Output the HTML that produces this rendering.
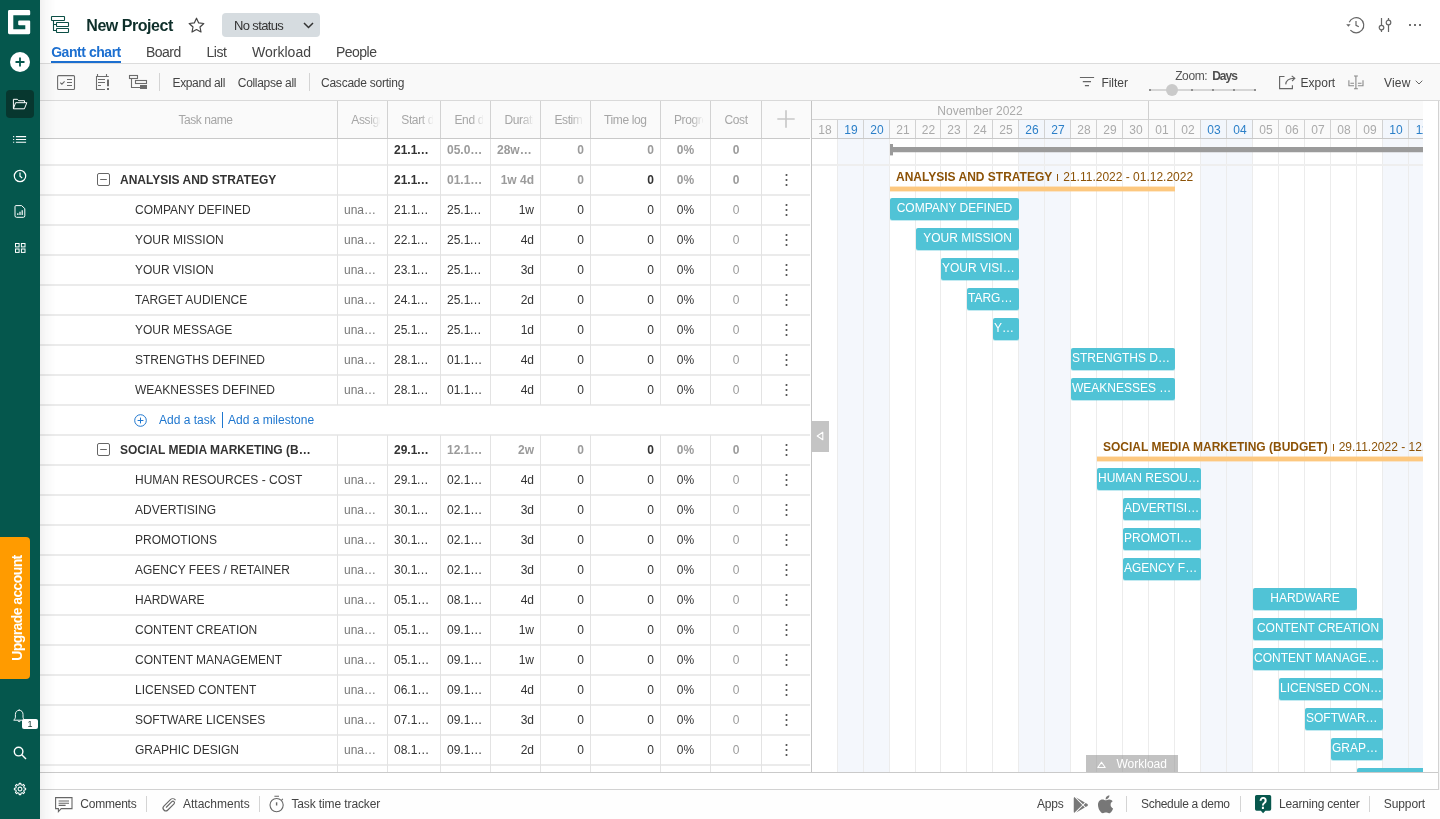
<!DOCTYPE html>
<html lang="en"><head><meta charset="utf-8"><title>New Project - Gantt chart</title>
<style>
*{box-sizing:border-box;margin:0;padding:0}
html,body{width:1440px;height:819px;overflow:hidden;background:#fff}
body{font-family:"Liberation Sans",Arial,sans-serif;font-size:12px;color:#333;position:relative}
.t{position:absolute;white-space:nowrap}
.abs{position:absolute}
svg{position:absolute;overflow:visible}
#side{position:absolute;left:0;top:0;width:40px;height:819px;background:#05574d}
#sideshadow{position:absolute;left:40px;top:0;width:16px;height:819px;background:linear-gradient(to right,rgba(0,0,0,.06),rgba(0,0,0,.028) 35%,rgba(0,0,0,0))}
.row{position:absolute;left:40px;width:770px;height:30px;border-bottom:1px solid #ebebeb;border-top:1px solid #ebebeb;background:#fff}
.c{position:absolute;top:-1px;height:30px;line-height:30px;white-space:nowrap;overflow:hidden;text-overflow:ellipsis;font-size:12px;color:#333}
.cb{border-left:1px solid #e3e3e3}
.g{color:#9b9b9b}
.g2{color:#777}
.b{font-weight:700}
.bar{position:absolute;height:22px;box-shadow:0 1px 0 rgba(80,195,214,.35);background:#50c3d6;border-radius:2px;color:#fff;font-size:12px;line-height:21px;text-align:center;white-space:nowrap;overflow:hidden;text-overflow:ellipsis}
.dc{position:absolute;height:18px;border-right:1px solid #d2d2d2;text-align:center;font-size:12px;line-height:20px;color:#aaa;padding-left:1px}
.we{background:#f2f6fc;color:#2b7fc8}
</style></head><body>
<div id="app" style="position:absolute;left:0;top:0;width:1440px;height:819px;will-change:transform">

<div class="abs" style="left:40px;top:63px;width:1400px;height:1px;background:#dcdcdc"></div>
<svg style="left:44px;top:8px" width="30" height="30" viewBox="0 0 30 30" fill="none" stroke="#0c4f46" stroke-width="1.1"><rect x="7.500" y="8.500" width="13" height="4" rx="0.500"/><rect x="12.500" y="14.500" width="12" height="4" rx="0.500"/><rect x="12.500" y="20.500" width="12" height="4" rx="0.500"/><path d="M9.500 12.500V22.500H12.500M9.500 16.500H12.500"/></svg>
<span class="t" style="left:86.30px;top:17.76px;font-size:16px;line-height:16px;letter-spacing:-0.459px;color:#0e2f2a;font-weight:700;">New Project</span>
<svg style="left:188px;top:17px" width="17" height="16" viewBox="0 0 17 16" fill="none" stroke="#444" stroke-width="1.2" stroke-linejoin="round">
<path d="M8.5 1.2l2.2 4.7 5.1.6-3.8 3.5 1 5-4.5-2.5L4 15l1-5L1.2 6.5l5.1-.6z"/></svg>
<div class="abs" style="left:222px;top:13px;width:98px;height:24px;background:#d6dce0;border-radius:4px"></div>
<span class="t" style="left:234.00px;top:18.50px;font-size:13px;line-height:13px;letter-spacing:-0.639px;color:#333;">No status</span>
<svg style="left:303px;top:22px" width="11" height="7" viewBox="0 0 11 7" fill="none" stroke="#333" stroke-width="1.5"><path d="M1 1l4.5 4.5L10 1"/></svg>
<span class="t" style="left:51.20px;top:45.35px;font-size:14px;line-height:14px;letter-spacing:-0.458px;color:#1c6fd0;font-weight:700;">Gantt chart</span>
<div class="abs" style="left:51px;top:61px;width:70px;height:2px;background:#1c6fd0"></div>
<span class="t" style="left:146.00px;top:45.35px;font-size:14px;line-height:14px;letter-spacing:-0.539px;color:#444;">Board</span>
<span class="t" style="left:206.50px;top:45.35px;font-size:14px;line-height:14px;letter-spacing:-0.429px;color:#444;">List</span>
<span class="t" style="left:252.00px;top:45.35px;font-size:14px;line-height:14px;letter-spacing:0.017px;color:#444;">Workload</span>
<span class="t" style="left:336.00px;top:45.35px;font-size:14px;line-height:14px;letter-spacing:-0.518px;color:#444;">People</span>
<svg style="left:1345px;top:15px" width="22" height="20" viewBox="0 0 22 20" fill="none" stroke="#666" stroke-width="1.2">
<path d="M4.2 7.2A7.6 7.6 0 1 1 5.4 15.2"/><path d="M11 6v4.3l2.8 1.4"/><path d="M1.2 9.2h4.4L3.4 11.8z" fill="#666" stroke="none"/></svg>
<svg style="left:1377px;top:17px" width="16" height="16" viewBox="0 0 16 16" fill="none" stroke="#666" stroke-width="1.2">
<path d="M4.5 1v7.2M4.5 13v2M11.5 1v2M11.5 8v7"/><circle cx="4.5" cy="10.6" r="2.3"/><circle cx="11.5" cy="5.5" r="2.3"/></svg>
<div class="abs" style="left:1409px;top:24px;width:2px;height:2px;background:#707070"></div>
<div class="abs" style="left:1414px;top:24px;width:2px;height:2px;background:#707070"></div>
<div class="abs" style="left:1419px;top:24px;width:2px;height:2px;background:#707070"></div>
<div class="abs" style="left:40px;top:64px;width:1400px;height:36px;background:#f9f9f9"></div>
<div class="abs" style="left:40px;top:100px;width:1400px;height:1px;background:#d9d9d9"></div>
<svg style="left:50px;top:68px" width="100" height="28" viewBox="0 0 100 28" fill="none" stroke="#6c6c6c" stroke-width="1.1">
<rect x="7.6" y="7.6" width="16.9" height="13.9" rx="1"/><path d="M10.200 14.600l1.700 1.600 2.700-2.900M17 11.500H22M17 14.500H22M17 17.500H22"/>
<path d="M46.500 21.500V8.500H58.800M46 21.500H55M47.500 6.100V8.500M56.500 6.100V8.500M48 11.500H55M48 14.500H55M48 17.500H51"/><path d="M58 11.500V18.200M58 20V22" stroke-width="2"/>
<rect x="79.500" y="7.500" width="8" height="3"/><rect x="85.500" y="12.500" width="11" height="3"/><path d="M81.500 10.500V19.500H90"/><rect x="90" y="17" width="7" height="4" fill="#6c6c6c" stroke="none"/></svg>
<div class="abs" style="left:159px;top:73px;width:1px;height:18px;background:#d4d4d4"></div>
<span class="t" style="left:172.50px;top:76.94px;font-size:12px;line-height:12px;letter-spacing:-0.360px;color:#444;">Expand all</span>
<span class="t" style="left:237.80px;top:76.94px;font-size:12px;line-height:12px;letter-spacing:-0.312px;color:#444;">Collapse all</span>
<div class="abs" style="left:309px;top:73px;width:1px;height:18px;background:#d4d4d4"></div>
<span class="t" style="left:321.00px;top:76.94px;font-size:12px;line-height:12px;letter-spacing:-0.236px;color:#444;">Cascade sorting</span>
<svg style="left:1070px;top:68px" width="30" height="28" viewBox="0 0 30 28" fill="none" stroke="#666" stroke-width="1.1"><path d="M9.9 9.5H24.1M12.8 13.6H21M14.9 17.6H19"/></svg>
<span class="t" style="left:1101.40px;top:77.14px;font-size:12px;line-height:12px;letter-spacing:-0.013px;color:#444;">Filter</span>
<span class="t" style="left:1175.20px;top:70.34px;font-size:12px;line-height:12px;letter-spacing:-0.402px;color:#555;">Zoom:</span>
<span class="t" style="left:1212.20px;top:70.34px;font-size:12px;line-height:12px;letter-spacing:-0.995px;color:#505050;font-weight:700;">Days</span>
<div class="abs" style="left:1149px;top:89px;width:107px;height:2px;background:#d6d6d6"></div>
<div class="abs" style="left:1149px;top:89px;width:2px;height:2px;background:#8f8f8f"></div>
<div class="abs" style="left:1191px;top:89px;width:2px;height:2px;background:#8f8f8f"></div>
<div class="abs" style="left:1212px;top:89px;width:2px;height:2px;background:#8f8f8f"></div>
<div class="abs" style="left:1233px;top:89px;width:2px;height:2px;background:#8f8f8f"></div>
<div class="abs" style="left:1254px;top:89px;width:2px;height:2px;background:#8f8f8f"></div>
<div class="abs" style="left:1165.5px;top:84px;width:12px;height:12px;border-radius:6px;background:#cacaca"></div>
<svg style="left:1270px;top:68px" width="30" height="28" viewBox="0 0 30 28" fill="none" stroke="#666" stroke-width="1.15"><path d="M14.5 8.5H9.6V20.6H22.4V17.2"/><path d="M15.7 16.4C16 12.6 19 10.5 24.2 10.3M21.7 7.9L24.8 10.3 22.1 13"/></svg>
<span class="t" style="left:1300.60px;top:77.14px;font-size:12px;line-height:12px;letter-spacing:-0.017px;color:#444;">Export</span>
<svg style="left:1270px;top:68px" width="100" height="28" viewBox="0 0 100 28" fill="none" stroke="#8a8a8a" stroke-width="1.1"><path d="M85.9 8V20.8M84 8H87.9M84 20.8H87.9M78.9 12.2V17.7H84M80.4 15.2H84M93 12.2V17.7H87.9M91.5 15.2H87.9"/></svg>
<span class="t" style="left:1384.00px;top:77.14px;font-size:12px;line-height:12px;letter-spacing:0.203px;color:#444;">View</span>
<svg style="left:1415px;top:80px" width="8" height="5" viewBox="0 0 8 5" fill="none" stroke="#666" stroke-width="1"><path d="M0.7 0.7l3.3 3.3 3.3-3.3"/></svg>
<div class="abs" style="left:40px;top:101px;width:771px;height:37px;background:#fafafa"></div>
<div class="abs" style="left:40px;top:138px;width:770px;height:1px;background:#c9c9c9"></div>
<div class="abs" style="left:337px;top:101px;width:1px;height:37px;background:#d2d2d2"></div>
<div class="abs" style="left:387px;top:101px;width:1px;height:37px;background:#d2d2d2"></div>
<div class="abs" style="left:440px;top:101px;width:1px;height:37px;background:#d2d2d2"></div>
<div class="abs" style="left:490px;top:101px;width:1px;height:37px;background:#d2d2d2"></div>
<div class="abs" style="left:540px;top:101px;width:1px;height:37px;background:#d2d2d2"></div>
<div class="abs" style="left:590px;top:101px;width:1px;height:37px;background:#d2d2d2"></div>
<div class="abs" style="left:660px;top:101px;width:1px;height:37px;background:#d2d2d2"></div>
<div class="abs" style="left:710px;top:101px;width:1px;height:37px;background:#d2d2d2"></div>
<div class="abs" style="left:761px;top:101px;width:1px;height:37px;background:#d2d2d2"></div>
<span class="t" style="left:178.40px;top:113.74px;font-size:12px;line-height:12px;letter-spacing:-0.428px;color:#a6a6a6;">Task name</span>
<span class="t" style="left:351.3px;top:113.74px;font-size:12px;line-height:14px;margin-top:-1px;letter-spacing:-0.38px;color:#a6a6a6;width:28.69999999999999px;overflow:hidden;-webkit-mask-image:linear-gradient(to right,#000 16.69999999999999px,rgba(0,0,0,.12) 28.69999999999999px);mask-image:linear-gradient(to right,#000 16.69999999999999px,rgba(0,0,0,.12) 28.69999999999999px);">Assignee</span>
<span class="t" style="left:401.3px;top:113.74px;font-size:12px;line-height:14px;margin-top:-1px;letter-spacing:-0.38px;color:#a6a6a6;width:31.69999999999999px;overflow:hidden;-webkit-mask-image:linear-gradient(to right,#000 19.69999999999999px,rgba(0,0,0,.12) 31.69999999999999px);mask-image:linear-gradient(to right,#000 19.69999999999999px,rgba(0,0,0,.12) 31.69999999999999px);">Start date</span>
<span class="t" style="left:454.5px;top:113.74px;font-size:12px;line-height:14px;margin-top:-1px;letter-spacing:-0.38px;color:#a6a6a6;width:28.5px;overflow:hidden;-webkit-mask-image:linear-gradient(to right,#000 16.5px,rgba(0,0,0,.12) 28.5px);mask-image:linear-gradient(to right,#000 16.5px,rgba(0,0,0,.12) 28.5px);">End date</span>
<span class="t" style="left:504.5px;top:113.74px;font-size:12px;line-height:14px;margin-top:-1px;letter-spacing:-0.38px;color:#a6a6a6;width:28.5px;overflow:hidden;-webkit-mask-image:linear-gradient(to right,#000 16.5px,rgba(0,0,0,.12) 28.5px);mask-image:linear-gradient(to right,#000 16.5px,rgba(0,0,0,.12) 28.5px);">Duration</span>
<span class="t" style="left:554.4px;top:113.74px;font-size:12px;line-height:14px;margin-top:-1px;letter-spacing:-0.38px;color:#a6a6a6;width:28.600000000000023px;overflow:hidden;-webkit-mask-image:linear-gradient(to right,#000 16.600000000000023px,rgba(0,0,0,.12) 28.600000000000023px);mask-image:linear-gradient(to right,#000 16.600000000000023px,rgba(0,0,0,.12) 28.600000000000023px);">Estimation</span>
<span class="t" style="left:604px;top:113.74px;font-size:12px;line-height:14px;margin-top:-1px;letter-spacing:-0.38px;color:#a6a6a6;">Time log</span>
<span class="t" style="left:674px;top:113.74px;font-size:12px;line-height:14px;margin-top:-1px;letter-spacing:-0.38px;color:#a6a6a6;width:29px;overflow:hidden;-webkit-mask-image:linear-gradient(to right,#000 17px,rgba(0,0,0,.12) 29px);mask-image:linear-gradient(to right,#000 17px,rgba(0,0,0,.12) 29px);">Progress</span>
<span class="t" style="left:724.5px;top:113.74px;font-size:12px;line-height:14px;margin-top:-1px;letter-spacing:-0.38px;color:#a6a6a6;">Cost</span>
<svg style="left:777px;top:110px" width="18" height="18" viewBox="0 0 18 18" fill="none" stroke="#c8c8c8" stroke-width="1.7"><path d="M9 0.3v17.4M0.3 9h17.4"/></svg>
<div class="abs" style="left:0;top:139px;width:1440px;height:633px;overflow:hidden">
<div class="row" style="top:-4px">
<div class="c cb g2" style="left:297px;width:50px;padding:0 6px 0 6px;text-align:left;"></div>
<div class="c cb b" style="left:347px;width:53px;padding:0 6px 0 6px;text-align:left;">21.11.2022</div>
<div class="c cb g b" style="left:400px;width:50px;padding:0 6px 0 6px;text-align:left;">05.06.2023</div>
<div class="c cb g b" style="left:450px;width:50px;padding:0 6px 0 6px;text-align:right;">28w 1d</div>
<div class="c cb g b" style="left:500px;width:50px;padding:0 6px 0 6px;text-align:right;">0</div>
<div class="c cb g b" style="left:550px;width:70px;padding:0 6px 0 6px;text-align:right;">0</div>
<div class="c cb g b" style="left:620px;width:50px;padding:0 6px 0 6px;text-align:center;">0%</div>
<div class="c cb g b" style="left:670px;width:51px;padding:0 6px 0 6px;text-align:center;">0</div>
<div class="c cb " style="left:721px;width:50px;padding:0 6px 0 6px;text-align:left;"></div>
</div>
<div class="row" style="top:26px">
<svg style="left:57px;top:7px" width="13" height="13" viewBox="0 0 13 13" fill="none" stroke="#666" stroke-width="1"><rect x="0.5" y="0.5" width="12" height="12" rx="1.500"/><path d="M3.200 6.500h6.600"/></svg>
<div class="c b" style="left:80px;width:198px;color:#333">ANALYSIS AND STRATEGY</div>
<div class="c cb g2" style="left:297px;width:50px;padding:0 6px 0 6px;text-align:left;"></div>
<div class="c cb b" style="left:347px;width:53px;padding:0 6px 0 6px;text-align:left;">21.11.2022</div>
<div class="c cb g b" style="left:400px;width:50px;padding:0 6px 0 6px;text-align:left;">01.12.2022</div>
<div class="c cb g b" style="left:450px;width:50px;padding:0 6px 0 6px;text-align:right;">1w 4d</div>
<div class="c cb g b" style="left:500px;width:50px;padding:0 6px 0 6px;text-align:right;">0</div>
<div class="c cb b" style="left:550px;width:70px;padding:0 6px 0 6px;text-align:right;">0</div>
<div class="c cb g b" style="left:620px;width:50px;padding:0 6px 0 6px;text-align:center;">0%</div>
<div class="c cb g b" style="left:670px;width:51px;padding:0 6px 0 6px;text-align:center;">0</div>
<div class="c cb " style="left:721px;width:50px;padding:0 6px 0 6px;text-align:left;"></div>
<svg style="left:745px;top:7px" width="3" height="14" viewBox="0 0 3 14" fill="#4a4a4a"><circle cx="1.5" cy="2" r="1.05"/><circle cx="1.5" cy="7" r="1.05"/><circle cx="1.5" cy="12" r="1.05"/></svg>
</div>
<div class="row" style="top:56px">
<div class="c" style="left:95px;width:195px">COMPANY DEFINED</div>
<div class="c cb g2" style="left:297px;width:50px;padding:0 6px 0 6px;text-align:left;">unassigned</div>
<div class="c cb " style="left:347px;width:53px;padding:0 6px 0 6px;text-align:left;">21.11.2022</div>
<div class="c cb " style="left:400px;width:50px;padding:0 6px 0 6px;text-align:left;">25.11.2022</div>
<div class="c cb " style="left:450px;width:50px;padding:0 6px 0 6px;text-align:right;">1w</div>
<div class="c cb " style="left:500px;width:50px;padding:0 6px 0 6px;text-align:right;">0</div>
<div class="c cb " style="left:550px;width:70px;padding:0 6px 0 6px;text-align:right;">0</div>
<div class="c cb " style="left:620px;width:50px;padding:0 6px 0 6px;text-align:center;">0%</div>
<div class="c cb g" style="left:670px;width:51px;padding:0 6px 0 6px;text-align:center;">0</div>
<div class="c cb " style="left:721px;width:50px;padding:0 6px 0 6px;text-align:left;"></div>
<svg style="left:745px;top:7px" width="3" height="14" viewBox="0 0 3 14" fill="#4a4a4a"><circle cx="1.5" cy="2" r="1.05"/><circle cx="1.5" cy="7" r="1.05"/><circle cx="1.5" cy="12" r="1.05"/></svg>
</div>
<div class="row" style="top:86px">
<div class="c" style="left:95px;width:195px">YOUR MISSION</div>
<div class="c cb g2" style="left:297px;width:50px;padding:0 6px 0 6px;text-align:left;">unassigned</div>
<div class="c cb " style="left:347px;width:53px;padding:0 6px 0 6px;text-align:left;">22.11.2022</div>
<div class="c cb " style="left:400px;width:50px;padding:0 6px 0 6px;text-align:left;">25.11.2022</div>
<div class="c cb " style="left:450px;width:50px;padding:0 6px 0 6px;text-align:right;">4d</div>
<div class="c cb " style="left:500px;width:50px;padding:0 6px 0 6px;text-align:right;">0</div>
<div class="c cb " style="left:550px;width:70px;padding:0 6px 0 6px;text-align:right;">0</div>
<div class="c cb " style="left:620px;width:50px;padding:0 6px 0 6px;text-align:center;">0%</div>
<div class="c cb g" style="left:670px;width:51px;padding:0 6px 0 6px;text-align:center;">0</div>
<div class="c cb " style="left:721px;width:50px;padding:0 6px 0 6px;text-align:left;"></div>
<svg style="left:745px;top:7px" width="3" height="14" viewBox="0 0 3 14" fill="#4a4a4a"><circle cx="1.5" cy="2" r="1.05"/><circle cx="1.5" cy="7" r="1.05"/><circle cx="1.5" cy="12" r="1.05"/></svg>
</div>
<div class="row" style="top:116px">
<div class="c" style="left:95px;width:195px">YOUR VISION</div>
<div class="c cb g2" style="left:297px;width:50px;padding:0 6px 0 6px;text-align:left;">unassigned</div>
<div class="c cb " style="left:347px;width:53px;padding:0 6px 0 6px;text-align:left;">23.11.2022</div>
<div class="c cb " style="left:400px;width:50px;padding:0 6px 0 6px;text-align:left;">25.11.2022</div>
<div class="c cb " style="left:450px;width:50px;padding:0 6px 0 6px;text-align:right;">3d</div>
<div class="c cb " style="left:500px;width:50px;padding:0 6px 0 6px;text-align:right;">0</div>
<div class="c cb " style="left:550px;width:70px;padding:0 6px 0 6px;text-align:right;">0</div>
<div class="c cb " style="left:620px;width:50px;padding:0 6px 0 6px;text-align:center;">0%</div>
<div class="c cb g" style="left:670px;width:51px;padding:0 6px 0 6px;text-align:center;">0</div>
<div class="c cb " style="left:721px;width:50px;padding:0 6px 0 6px;text-align:left;"></div>
<svg style="left:745px;top:7px" width="3" height="14" viewBox="0 0 3 14" fill="#4a4a4a"><circle cx="1.5" cy="2" r="1.05"/><circle cx="1.5" cy="7" r="1.05"/><circle cx="1.5" cy="12" r="1.05"/></svg>
</div>
<div class="row" style="top:146px">
<div class="c" style="left:95px;width:195px">TARGET AUDIENCE</div>
<div class="c cb g2" style="left:297px;width:50px;padding:0 6px 0 6px;text-align:left;">unassigned</div>
<div class="c cb " style="left:347px;width:53px;padding:0 6px 0 6px;text-align:left;">24.11.2022</div>
<div class="c cb " style="left:400px;width:50px;padding:0 6px 0 6px;text-align:left;">25.11.2022</div>
<div class="c cb " style="left:450px;width:50px;padding:0 6px 0 6px;text-align:right;">2d</div>
<div class="c cb " style="left:500px;width:50px;padding:0 6px 0 6px;text-align:right;">0</div>
<div class="c cb " style="left:550px;width:70px;padding:0 6px 0 6px;text-align:right;">0</div>
<div class="c cb " style="left:620px;width:50px;padding:0 6px 0 6px;text-align:center;">0%</div>
<div class="c cb g" style="left:670px;width:51px;padding:0 6px 0 6px;text-align:center;">0</div>
<div class="c cb " style="left:721px;width:50px;padding:0 6px 0 6px;text-align:left;"></div>
<svg style="left:745px;top:7px" width="3" height="14" viewBox="0 0 3 14" fill="#4a4a4a"><circle cx="1.5" cy="2" r="1.05"/><circle cx="1.5" cy="7" r="1.05"/><circle cx="1.5" cy="12" r="1.05"/></svg>
</div>
<div class="row" style="top:176px">
<div class="c" style="left:95px;width:195px">YOUR MESSAGE</div>
<div class="c cb g2" style="left:297px;width:50px;padding:0 6px 0 6px;text-align:left;">unassigned</div>
<div class="c cb " style="left:347px;width:53px;padding:0 6px 0 6px;text-align:left;">25.11.2022</div>
<div class="c cb " style="left:400px;width:50px;padding:0 6px 0 6px;text-align:left;">25.11.2022</div>
<div class="c cb " style="left:450px;width:50px;padding:0 6px 0 6px;text-align:right;">1d</div>
<div class="c cb " style="left:500px;width:50px;padding:0 6px 0 6px;text-align:right;">0</div>
<div class="c cb " style="left:550px;width:70px;padding:0 6px 0 6px;text-align:right;">0</div>
<div class="c cb " style="left:620px;width:50px;padding:0 6px 0 6px;text-align:center;">0%</div>
<div class="c cb g" style="left:670px;width:51px;padding:0 6px 0 6px;text-align:center;">0</div>
<div class="c cb " style="left:721px;width:50px;padding:0 6px 0 6px;text-align:left;"></div>
<svg style="left:745px;top:7px" width="3" height="14" viewBox="0 0 3 14" fill="#4a4a4a"><circle cx="1.5" cy="2" r="1.05"/><circle cx="1.5" cy="7" r="1.05"/><circle cx="1.5" cy="12" r="1.05"/></svg>
</div>
<div class="row" style="top:206px">
<div class="c" style="left:95px;width:195px">STRENGTHS DEFINED</div>
<div class="c cb g2" style="left:297px;width:50px;padding:0 6px 0 6px;text-align:left;">unassigned</div>
<div class="c cb " style="left:347px;width:53px;padding:0 6px 0 6px;text-align:left;">28.11.2022</div>
<div class="c cb " style="left:400px;width:50px;padding:0 6px 0 6px;text-align:left;">01.12.2022</div>
<div class="c cb " style="left:450px;width:50px;padding:0 6px 0 6px;text-align:right;">4d</div>
<div class="c cb " style="left:500px;width:50px;padding:0 6px 0 6px;text-align:right;">0</div>
<div class="c cb " style="left:550px;width:70px;padding:0 6px 0 6px;text-align:right;">0</div>
<div class="c cb " style="left:620px;width:50px;padding:0 6px 0 6px;text-align:center;">0%</div>
<div class="c cb g" style="left:670px;width:51px;padding:0 6px 0 6px;text-align:center;">0</div>
<div class="c cb " style="left:721px;width:50px;padding:0 6px 0 6px;text-align:left;"></div>
<svg style="left:745px;top:7px" width="3" height="14" viewBox="0 0 3 14" fill="#4a4a4a"><circle cx="1.5" cy="2" r="1.05"/><circle cx="1.5" cy="7" r="1.05"/><circle cx="1.5" cy="12" r="1.05"/></svg>
</div>
<div class="row" style="top:236px">
<div class="c" style="left:95px;width:195px">WEAKNESSES DEFINED</div>
<div class="c cb g2" style="left:297px;width:50px;padding:0 6px 0 6px;text-align:left;">unassigned</div>
<div class="c cb " style="left:347px;width:53px;padding:0 6px 0 6px;text-align:left;">28.11.2022</div>
<div class="c cb " style="left:400px;width:50px;padding:0 6px 0 6px;text-align:left;">01.12.2022</div>
<div class="c cb " style="left:450px;width:50px;padding:0 6px 0 6px;text-align:right;">4d</div>
<div class="c cb " style="left:500px;width:50px;padding:0 6px 0 6px;text-align:right;">0</div>
<div class="c cb " style="left:550px;width:70px;padding:0 6px 0 6px;text-align:right;">0</div>
<div class="c cb " style="left:620px;width:50px;padding:0 6px 0 6px;text-align:center;">0%</div>
<div class="c cb g" style="left:670px;width:51px;padding:0 6px 0 6px;text-align:center;">0</div>
<div class="c cb " style="left:721px;width:50px;padding:0 6px 0 6px;text-align:left;"></div>
<svg style="left:745px;top:7px" width="3" height="14" viewBox="0 0 3 14" fill="#4a4a4a"><circle cx="1.5" cy="2" r="1.05"/><circle cx="1.5" cy="7" r="1.05"/><circle cx="1.5" cy="12" r="1.05"/></svg>
</div>
<div class="row" style="top:266px">
<svg style="left:94px;top:7.5px" width="13" height="13" viewBox="0 0 13 13" fill="none" stroke="#1f77cf" stroke-width="1"><circle cx="6.5" cy="6.5" r="5.8"/><path d="M6.5 3.6v5.8M3.6 6.5h5.8"/></svg>
<span class="t" style="left:119px;top:-1px;line-height:30px;font-size:12px;color:#1f77cf">Add a task</span>
<div class="abs" style="left:182px;top:6px;width:1px;height:16px;background:#1f77cf"></div>
<span class="t" style="left:188px;top:-1px;line-height:30px;font-size:12px;color:#1f77cf">Add a milestone</span>
</div>
<div class="row" style="top:296px">
<svg style="left:57px;top:7px" width="13" height="13" viewBox="0 0 13 13" fill="none" stroke="#666" stroke-width="1"><rect x="0.5" y="0.5" width="12" height="12" rx="1.500"/><path d="M3.200 6.500h6.600"/></svg>
<div class="c b" style="left:80px;width:198px;color:#333">SOCIAL MEDIA MARKETING (BUDGET)</div>
<div class="c cb g2" style="left:297px;width:50px;padding:0 6px 0 6px;text-align:left;"></div>
<div class="c cb b" style="left:347px;width:53px;padding:0 6px 0 6px;text-align:left;">29.11.2022</div>
<div class="c cb g b" style="left:400px;width:50px;padding:0 6px 0 6px;text-align:left;">12.12.2022</div>
<div class="c cb g b" style="left:450px;width:50px;padding:0 6px 0 6px;text-align:right;">2w</div>
<div class="c cb g b" style="left:500px;width:50px;padding:0 6px 0 6px;text-align:right;">0</div>
<div class="c cb b" style="left:550px;width:70px;padding:0 6px 0 6px;text-align:right;">0</div>
<div class="c cb g b" style="left:620px;width:50px;padding:0 6px 0 6px;text-align:center;">0%</div>
<div class="c cb g b" style="left:670px;width:51px;padding:0 6px 0 6px;text-align:center;">0</div>
<div class="c cb " style="left:721px;width:50px;padding:0 6px 0 6px;text-align:left;"></div>
<svg style="left:745px;top:7px" width="3" height="14" viewBox="0 0 3 14" fill="#4a4a4a"><circle cx="1.5" cy="2" r="1.05"/><circle cx="1.5" cy="7" r="1.05"/><circle cx="1.5" cy="12" r="1.05"/></svg>
</div>
<div class="row" style="top:326px">
<div class="c" style="left:95px;width:195px">HUMAN RESOURCES - COST</div>
<div class="c cb g2" style="left:297px;width:50px;padding:0 6px 0 6px;text-align:left;">unassigned</div>
<div class="c cb " style="left:347px;width:53px;padding:0 6px 0 6px;text-align:left;">29.11.2022</div>
<div class="c cb " style="left:400px;width:50px;padding:0 6px 0 6px;text-align:left;">02.12.2022</div>
<div class="c cb " style="left:450px;width:50px;padding:0 6px 0 6px;text-align:right;">4d</div>
<div class="c cb " style="left:500px;width:50px;padding:0 6px 0 6px;text-align:right;">0</div>
<div class="c cb " style="left:550px;width:70px;padding:0 6px 0 6px;text-align:right;">0</div>
<div class="c cb " style="left:620px;width:50px;padding:0 6px 0 6px;text-align:center;">0%</div>
<div class="c cb g" style="left:670px;width:51px;padding:0 6px 0 6px;text-align:center;">0</div>
<div class="c cb " style="left:721px;width:50px;padding:0 6px 0 6px;text-align:left;"></div>
<svg style="left:745px;top:7px" width="3" height="14" viewBox="0 0 3 14" fill="#4a4a4a"><circle cx="1.5" cy="2" r="1.05"/><circle cx="1.5" cy="7" r="1.05"/><circle cx="1.5" cy="12" r="1.05"/></svg>
</div>
<div class="row" style="top:356px">
<div class="c" style="left:95px;width:195px">ADVERTISING</div>
<div class="c cb g2" style="left:297px;width:50px;padding:0 6px 0 6px;text-align:left;">unassigned</div>
<div class="c cb " style="left:347px;width:53px;padding:0 6px 0 6px;text-align:left;">30.11.2022</div>
<div class="c cb " style="left:400px;width:50px;padding:0 6px 0 6px;text-align:left;">02.12.2022</div>
<div class="c cb " style="left:450px;width:50px;padding:0 6px 0 6px;text-align:right;">3d</div>
<div class="c cb " style="left:500px;width:50px;padding:0 6px 0 6px;text-align:right;">0</div>
<div class="c cb " style="left:550px;width:70px;padding:0 6px 0 6px;text-align:right;">0</div>
<div class="c cb " style="left:620px;width:50px;padding:0 6px 0 6px;text-align:center;">0%</div>
<div class="c cb g" style="left:670px;width:51px;padding:0 6px 0 6px;text-align:center;">0</div>
<div class="c cb " style="left:721px;width:50px;padding:0 6px 0 6px;text-align:left;"></div>
<svg style="left:745px;top:7px" width="3" height="14" viewBox="0 0 3 14" fill="#4a4a4a"><circle cx="1.5" cy="2" r="1.05"/><circle cx="1.5" cy="7" r="1.05"/><circle cx="1.5" cy="12" r="1.05"/></svg>
</div>
<div class="row" style="top:386px">
<div class="c" style="left:95px;width:195px">PROMOTIONS</div>
<div class="c cb g2" style="left:297px;width:50px;padding:0 6px 0 6px;text-align:left;">unassigned</div>
<div class="c cb " style="left:347px;width:53px;padding:0 6px 0 6px;text-align:left;">30.11.2022</div>
<div class="c cb " style="left:400px;width:50px;padding:0 6px 0 6px;text-align:left;">02.12.2022</div>
<div class="c cb " style="left:450px;width:50px;padding:0 6px 0 6px;text-align:right;">3d</div>
<div class="c cb " style="left:500px;width:50px;padding:0 6px 0 6px;text-align:right;">0</div>
<div class="c cb " style="left:550px;width:70px;padding:0 6px 0 6px;text-align:right;">0</div>
<div class="c cb " style="left:620px;width:50px;padding:0 6px 0 6px;text-align:center;">0%</div>
<div class="c cb g" style="left:670px;width:51px;padding:0 6px 0 6px;text-align:center;">0</div>
<div class="c cb " style="left:721px;width:50px;padding:0 6px 0 6px;text-align:left;"></div>
<svg style="left:745px;top:7px" width="3" height="14" viewBox="0 0 3 14" fill="#4a4a4a"><circle cx="1.5" cy="2" r="1.05"/><circle cx="1.5" cy="7" r="1.05"/><circle cx="1.5" cy="12" r="1.05"/></svg>
</div>
<div class="row" style="top:416px">
<div class="c" style="left:95px;width:195px">AGENCY FEES / RETAINER</div>
<div class="c cb g2" style="left:297px;width:50px;padding:0 6px 0 6px;text-align:left;">unassigned</div>
<div class="c cb " style="left:347px;width:53px;padding:0 6px 0 6px;text-align:left;">30.11.2022</div>
<div class="c cb " style="left:400px;width:50px;padding:0 6px 0 6px;text-align:left;">02.12.2022</div>
<div class="c cb " style="left:450px;width:50px;padding:0 6px 0 6px;text-align:right;">3d</div>
<div class="c cb " style="left:500px;width:50px;padding:0 6px 0 6px;text-align:right;">0</div>
<div class="c cb " style="left:550px;width:70px;padding:0 6px 0 6px;text-align:right;">0</div>
<div class="c cb " style="left:620px;width:50px;padding:0 6px 0 6px;text-align:center;">0%</div>
<div class="c cb g" style="left:670px;width:51px;padding:0 6px 0 6px;text-align:center;">0</div>
<div class="c cb " style="left:721px;width:50px;padding:0 6px 0 6px;text-align:left;"></div>
<svg style="left:745px;top:7px" width="3" height="14" viewBox="0 0 3 14" fill="#4a4a4a"><circle cx="1.5" cy="2" r="1.05"/><circle cx="1.5" cy="7" r="1.05"/><circle cx="1.5" cy="12" r="1.05"/></svg>
</div>
<div class="row" style="top:446px">
<div class="c" style="left:95px;width:195px">HARDWARE</div>
<div class="c cb g2" style="left:297px;width:50px;padding:0 6px 0 6px;text-align:left;">unassigned</div>
<div class="c cb " style="left:347px;width:53px;padding:0 6px 0 6px;text-align:left;">05.12.2022</div>
<div class="c cb " style="left:400px;width:50px;padding:0 6px 0 6px;text-align:left;">08.12.2022</div>
<div class="c cb " style="left:450px;width:50px;padding:0 6px 0 6px;text-align:right;">4d</div>
<div class="c cb " style="left:500px;width:50px;padding:0 6px 0 6px;text-align:right;">0</div>
<div class="c cb " style="left:550px;width:70px;padding:0 6px 0 6px;text-align:right;">0</div>
<div class="c cb " style="left:620px;width:50px;padding:0 6px 0 6px;text-align:center;">0%</div>
<div class="c cb g" style="left:670px;width:51px;padding:0 6px 0 6px;text-align:center;">0</div>
<div class="c cb " style="left:721px;width:50px;padding:0 6px 0 6px;text-align:left;"></div>
<svg style="left:745px;top:7px" width="3" height="14" viewBox="0 0 3 14" fill="#4a4a4a"><circle cx="1.5" cy="2" r="1.05"/><circle cx="1.5" cy="7" r="1.05"/><circle cx="1.5" cy="12" r="1.05"/></svg>
</div>
<div class="row" style="top:476px">
<div class="c" style="left:95px;width:195px">CONTENT CREATION</div>
<div class="c cb g2" style="left:297px;width:50px;padding:0 6px 0 6px;text-align:left;">unassigned</div>
<div class="c cb " style="left:347px;width:53px;padding:0 6px 0 6px;text-align:left;">05.12.2022</div>
<div class="c cb " style="left:400px;width:50px;padding:0 6px 0 6px;text-align:left;">09.12.2022</div>
<div class="c cb " style="left:450px;width:50px;padding:0 6px 0 6px;text-align:right;">1w</div>
<div class="c cb " style="left:500px;width:50px;padding:0 6px 0 6px;text-align:right;">0</div>
<div class="c cb " style="left:550px;width:70px;padding:0 6px 0 6px;text-align:right;">0</div>
<div class="c cb " style="left:620px;width:50px;padding:0 6px 0 6px;text-align:center;">0%</div>
<div class="c cb g" style="left:670px;width:51px;padding:0 6px 0 6px;text-align:center;">0</div>
<div class="c cb " style="left:721px;width:50px;padding:0 6px 0 6px;text-align:left;"></div>
<svg style="left:745px;top:7px" width="3" height="14" viewBox="0 0 3 14" fill="#4a4a4a"><circle cx="1.5" cy="2" r="1.05"/><circle cx="1.5" cy="7" r="1.05"/><circle cx="1.5" cy="12" r="1.05"/></svg>
</div>
<div class="row" style="top:506px">
<div class="c" style="left:95px;width:195px">CONTENT MANAGEMENT</div>
<div class="c cb g2" style="left:297px;width:50px;padding:0 6px 0 6px;text-align:left;">unassigned</div>
<div class="c cb " style="left:347px;width:53px;padding:0 6px 0 6px;text-align:left;">05.12.2022</div>
<div class="c cb " style="left:400px;width:50px;padding:0 6px 0 6px;text-align:left;">09.12.2022</div>
<div class="c cb " style="left:450px;width:50px;padding:0 6px 0 6px;text-align:right;">1w</div>
<div class="c cb " style="left:500px;width:50px;padding:0 6px 0 6px;text-align:right;">0</div>
<div class="c cb " style="left:550px;width:70px;padding:0 6px 0 6px;text-align:right;">0</div>
<div class="c cb " style="left:620px;width:50px;padding:0 6px 0 6px;text-align:center;">0%</div>
<div class="c cb g" style="left:670px;width:51px;padding:0 6px 0 6px;text-align:center;">0</div>
<div class="c cb " style="left:721px;width:50px;padding:0 6px 0 6px;text-align:left;"></div>
<svg style="left:745px;top:7px" width="3" height="14" viewBox="0 0 3 14" fill="#4a4a4a"><circle cx="1.5" cy="2" r="1.05"/><circle cx="1.5" cy="7" r="1.05"/><circle cx="1.5" cy="12" r="1.05"/></svg>
</div>
<div class="row" style="top:536px">
<div class="c" style="left:95px;width:195px">LICENSED CONTENT</div>
<div class="c cb g2" style="left:297px;width:50px;padding:0 6px 0 6px;text-align:left;">unassigned</div>
<div class="c cb " style="left:347px;width:53px;padding:0 6px 0 6px;text-align:left;">06.12.2022</div>
<div class="c cb " style="left:400px;width:50px;padding:0 6px 0 6px;text-align:left;">09.12.2022</div>
<div class="c cb " style="left:450px;width:50px;padding:0 6px 0 6px;text-align:right;">4d</div>
<div class="c cb " style="left:500px;width:50px;padding:0 6px 0 6px;text-align:right;">0</div>
<div class="c cb " style="left:550px;width:70px;padding:0 6px 0 6px;text-align:right;">0</div>
<div class="c cb " style="left:620px;width:50px;padding:0 6px 0 6px;text-align:center;">0%</div>
<div class="c cb g" style="left:670px;width:51px;padding:0 6px 0 6px;text-align:center;">0</div>
<div class="c cb " style="left:721px;width:50px;padding:0 6px 0 6px;text-align:left;"></div>
<svg style="left:745px;top:7px" width="3" height="14" viewBox="0 0 3 14" fill="#4a4a4a"><circle cx="1.5" cy="2" r="1.05"/><circle cx="1.5" cy="7" r="1.05"/><circle cx="1.5" cy="12" r="1.05"/></svg>
</div>
<div class="row" style="top:566px">
<div class="c" style="left:95px;width:195px">SOFTWARE LICENSES</div>
<div class="c cb g2" style="left:297px;width:50px;padding:0 6px 0 6px;text-align:left;">unassigned</div>
<div class="c cb " style="left:347px;width:53px;padding:0 6px 0 6px;text-align:left;">07.12.2022</div>
<div class="c cb " style="left:400px;width:50px;padding:0 6px 0 6px;text-align:left;">09.12.2022</div>
<div class="c cb " style="left:450px;width:50px;padding:0 6px 0 6px;text-align:right;">3d</div>
<div class="c cb " style="left:500px;width:50px;padding:0 6px 0 6px;text-align:right;">0</div>
<div class="c cb " style="left:550px;width:70px;padding:0 6px 0 6px;text-align:right;">0</div>
<div class="c cb " style="left:620px;width:50px;padding:0 6px 0 6px;text-align:center;">0%</div>
<div class="c cb g" style="left:670px;width:51px;padding:0 6px 0 6px;text-align:center;">0</div>
<div class="c cb " style="left:721px;width:50px;padding:0 6px 0 6px;text-align:left;"></div>
<svg style="left:745px;top:7px" width="3" height="14" viewBox="0 0 3 14" fill="#4a4a4a"><circle cx="1.5" cy="2" r="1.05"/><circle cx="1.5" cy="7" r="1.05"/><circle cx="1.5" cy="12" r="1.05"/></svg>
</div>
<div class="row" style="top:596px">
<div class="c" style="left:95px;width:195px">GRAPHIC DESIGN</div>
<div class="c cb g2" style="left:297px;width:50px;padding:0 6px 0 6px;text-align:left;">unassigned</div>
<div class="c cb " style="left:347px;width:53px;padding:0 6px 0 6px;text-align:left;">08.12.2022</div>
<div class="c cb " style="left:400px;width:50px;padding:0 6px 0 6px;text-align:left;">09.12.2022</div>
<div class="c cb " style="left:450px;width:50px;padding:0 6px 0 6px;text-align:right;">2d</div>
<div class="c cb " style="left:500px;width:50px;padding:0 6px 0 6px;text-align:right;">0</div>
<div class="c cb " style="left:550px;width:70px;padding:0 6px 0 6px;text-align:right;">0</div>
<div class="c cb " style="left:620px;width:50px;padding:0 6px 0 6px;text-align:center;">0%</div>
<div class="c cb g" style="left:670px;width:51px;padding:0 6px 0 6px;text-align:center;">0</div>
<div class="c cb " style="left:721px;width:50px;padding:0 6px 0 6px;text-align:left;"></div>
<svg style="left:745px;top:7px" width="3" height="14" viewBox="0 0 3 14" fill="#4a4a4a"><circle cx="1.5" cy="2" r="1.05"/><circle cx="1.5" cy="7" r="1.05"/><circle cx="1.5" cy="12" r="1.05"/></svg>
</div>
<div class="row" style="top:626px">
<div class="c cb " style="left:297px;width:50px;padding:0 6px 0 6px;text-align:left;"></div>
<div class="c cb " style="left:347px;width:53px;padding:0 6px 0 6px;text-align:left;"></div>
<div class="c cb " style="left:400px;width:50px;padding:0 6px 0 6px;text-align:left;"></div>
<div class="c cb " style="left:450px;width:50px;padding:0 6px 0 6px;text-align:left;"></div>
<div class="c cb " style="left:500px;width:50px;padding:0 6px 0 6px;text-align:left;"></div>
<div class="c cb " style="left:550px;width:70px;padding:0 6px 0 6px;text-align:left;"></div>
<div class="c cb " style="left:620px;width:50px;padding:0 6px 0 6px;text-align:left;"></div>
<div class="c cb " style="left:670px;width:51px;padding:0 6px 0 6px;text-align:left;"></div>
<div class="c cb " style="left:721px;width:50px;padding:0 6px 0 6px;text-align:left;"></div>
</div>
</div>
<div class="abs" style="left:40px;top:772px;width:1398px;height:1px;background:#cacaca"></div>
<div class="abs" style="left:40px;top:789px;width:1399px;height:1px;background:#d2d2d2"></div>
<div class="abs" style="left:1438px;top:101px;width:1px;height:688px;background:#d2d2d2"></div><div class="abs" style="left:1439px;top:101px;width:1px;height:689px;background:#f6f6f6"></div>
<div class="abs" style="left:811px;top:101px;width:1px;height:671px;background:#c4c4c4"></div>
<div class="abs" style="left:812px;top:101px;width:611px;height:671px;overflow:hidden;background:#fff">
<div class="abs" style="left:0;top:0;width:611px;height:37px;background:#fafafa"></div>
<div class="abs" style="left:0;top:18px;width:611px;height:1px;background:#d4d4d4"></div>
<div class="abs" style="left:0;top:37px;width:611px;height:1px;background:#c9c9c9"></div>
<div class="abs" style="left:336px;top:0;width:1px;height:19px;background:#d0d0d0"></div>
<span class="t" style="left:0;width:336px;text-align:center;top:3px;line-height:14px;font-size:12px;color:#aaa">November 2022</span>
<div class="abs" style="left:25px;top:38px;width:1px;height:633px;background:#ececec"></div>
<div class="dc" style="left:0px;top:19px;width:26px">18</div>
<div class="abs" style="left:26px;top:38px;width:26px;height:633px;background:#f4f7fc"></div>
<div class="abs" style="left:51px;top:38px;width:1px;height:633px;background:#ececec"></div>
<div class="dc we" style="left:26px;top:19px;width:26px">19</div>
<div class="abs" style="left:52px;top:38px;width:26px;height:633px;background:#f4f7fc"></div>
<div class="abs" style="left:77px;top:38px;width:1px;height:633px;background:#ececec"></div>
<div class="dc we" style="left:52px;top:19px;width:26px">20</div>
<div class="abs" style="left:103px;top:38px;width:1px;height:633px;background:#ececec"></div>
<div class="dc" style="left:78px;top:19px;width:26px">21</div>
<div class="abs" style="left:128px;top:38px;width:1px;height:633px;background:#ececec"></div>
<div class="dc" style="left:104px;top:19px;width:25px">22</div>
<div class="abs" style="left:154px;top:38px;width:1px;height:633px;background:#ececec"></div>
<div class="dc" style="left:129px;top:19px;width:26px">23</div>
<div class="abs" style="left:180px;top:38px;width:1px;height:633px;background:#ececec"></div>
<div class="dc" style="left:155px;top:19px;width:26px">24</div>
<div class="abs" style="left:206px;top:38px;width:1px;height:633px;background:#ececec"></div>
<div class="dc" style="left:181px;top:19px;width:26px">25</div>
<div class="abs" style="left:207px;top:38px;width:26px;height:633px;background:#f4f7fc"></div>
<div class="abs" style="left:232px;top:38px;width:1px;height:633px;background:#ececec"></div>
<div class="dc we" style="left:207px;top:19px;width:26px">26</div>
<div class="abs" style="left:233px;top:38px;width:26px;height:633px;background:#f4f7fc"></div>
<div class="abs" style="left:258px;top:38px;width:1px;height:633px;background:#ececec"></div>
<div class="dc we" style="left:233px;top:19px;width:26px">27</div>
<div class="abs" style="left:284px;top:38px;width:1px;height:633px;background:#ececec"></div>
<div class="dc" style="left:259px;top:19px;width:26px">28</div>
<div class="abs" style="left:310px;top:38px;width:1px;height:633px;background:#ececec"></div>
<div class="dc" style="left:285px;top:19px;width:26px">29</div>
<div class="abs" style="left:336px;top:38px;width:1px;height:633px;background:#ececec"></div>
<div class="dc" style="left:311px;top:19px;width:26px">30</div>
<div class="abs" style="left:362px;top:38px;width:1px;height:633px;background:#ececec"></div>
<div class="dc" style="left:337px;top:19px;width:26px">01</div>
<div class="abs" style="left:388px;top:38px;width:1px;height:633px;background:#ececec"></div>
<div class="dc" style="left:363px;top:19px;width:26px">02</div>
<div class="abs" style="left:389px;top:38px;width:26px;height:633px;background:#f4f7fc"></div>
<div class="abs" style="left:414px;top:38px;width:1px;height:633px;background:#ececec"></div>
<div class="dc we" style="left:389px;top:19px;width:26px">03</div>
<div class="abs" style="left:415px;top:38px;width:26px;height:633px;background:#f4f7fc"></div>
<div class="abs" style="left:440px;top:38px;width:1px;height:633px;background:#ececec"></div>
<div class="dc we" style="left:415px;top:19px;width:26px">04</div>
<div class="abs" style="left:466px;top:38px;width:1px;height:633px;background:#ececec"></div>
<div class="dc" style="left:441px;top:19px;width:26px">05</div>
<div class="abs" style="left:492px;top:38px;width:1px;height:633px;background:#ececec"></div>
<div class="dc" style="left:467px;top:19px;width:26px">06</div>
<div class="abs" style="left:518px;top:38px;width:1px;height:633px;background:#ececec"></div>
<div class="dc" style="left:493px;top:19px;width:26px">07</div>
<div class="abs" style="left:544px;top:38px;width:1px;height:633px;background:#ececec"></div>
<div class="dc" style="left:519px;top:19px;width:26px">08</div>
<div class="abs" style="left:570px;top:38px;width:1px;height:633px;background:#ececec"></div>
<div class="dc" style="left:545px;top:19px;width:26px">09</div>
<div class="abs" style="left:571px;top:38px;width:26px;height:633px;background:#f4f7fc"></div>
<div class="abs" style="left:596px;top:38px;width:1px;height:633px;background:#ececec"></div>
<div class="dc we" style="left:571px;top:19px;width:26px">10</div>
<div class="abs" style="left:597px;top:38px;width:26px;height:633px;background:#f4f7fc"></div>
<div class="abs" style="left:622px;top:38px;width:1px;height:633px;background:#ececec"></div>
<div class="dc we" style="left:597px;top:19px;width:26px">11</div>
<div class="abs" style="left:0;top:63px;width:611px;height:2px;background:#eeeeee"></div>
<div class="abs" style="left:78px;top:46px;width:533px;height:5px;background:#9b9b9b;box-shadow:0 1px 0 rgba(155,155,155,.25)"></div>
<div class="abs" style="left:78px;top:43px;width:3px;height:11px;background:#9b9b9b;box-shadow:0 1px 0 rgba(155,155,155,.4)"></div>
<div class="abs" style="left:78px;top:85px;width:285px;height:6px;background:linear-gradient(to bottom,rgba(253,200,127,.45) 1px,#fdc87f 1px,#fdc87f 5px,rgba(253,200,127,.4) 5px)"></div>
<span class="t" style="left:84px;top:69px;line-height:14px;font-size:12px;color:#8c5206"><b>ANALYSIS AND STRATEGY</b><span style="display:inline-block;width:1px;height:7px;background:#8c5206;margin:0 5px 0 5px;vertical-align:0"></span>21.11.2022 - 01.12.2022</span>
<div class="bar" style="left:78px;top:97px;width:129px;">COMPANY DEFINED</div>
<div class="bar" style="left:104px;top:127px;width:103px;">YOUR MISSION</div>
<div class="bar" style="left:129px;top:157px;width:78px;text-align:left;padding-left:1px;">YOUR VISION</div>
<div class="bar" style="left:155px;top:187px;width:52px;text-align:left;padding-left:1px;">TARGET AUDIENCE</div>
<div class="bar" style="left:181px;top:217px;width:26px;text-align:left;padding-left:1px;">YOUR MESSAGE</div>
<div class="bar" style="left:259px;top:247px;width:104px;text-align:left;padding-left:1px;">STRENGTHS DEFINED</div>
<div class="bar" style="left:259px;top:277px;width:104px;text-align:left;padding-left:1px;">WEAKNESSES DEFINED</div>
<div class="abs" style="left:285px;top:355px;width:326px;height:6px;background:linear-gradient(to bottom,rgba(253,200,127,.45) 1px,#fdc87f 1px,#fdc87f 5px,rgba(253,200,127,.4) 5px)"></div>
<span class="t" style="left:291px;top:339px;line-height:14px;font-size:12px;color:#8c5206"><b>SOCIAL MEDIA MARKETING (BUDGET)</b><span style="display:inline-block;width:1px;height:7px;background:#8c5206;margin:0 5px 0 5px;vertical-align:0"></span>29.11.2022 - 12.12.2022</span>
<div class="bar" style="left:285px;top:367px;width:104px;text-align:left;padding-left:1px;">HUMAN RESOURCES - COST</div>
<div class="bar" style="left:311px;top:397px;width:78px;text-align:left;padding-left:1px;">ADVERTISING</div>
<div class="bar" style="left:311px;top:427px;width:78px;text-align:left;padding-left:1px;">PROMOTIONS</div>
<div class="bar" style="left:311px;top:457px;width:78px;text-align:left;padding-left:1px;">AGENCY FEES / RETAINER</div>
<div class="bar" style="left:441px;top:487px;width:104px;">HARDWARE</div>
<div class="bar" style="left:441px;top:517px;width:130px;">CONTENT CREATION</div>
<div class="bar" style="left:441px;top:547px;width:130px;text-align:left;padding-left:1px;">CONTENT MANAGEMENT</div>
<div class="bar" style="left:467px;top:577px;width:104px;text-align:left;padding-left:1px;">LICENSED CONTENT</div>
<div class="bar" style="left:493px;top:607px;width:78px;text-align:left;padding-left:1px;">SOFTWARE LICENSES</div>
<div class="bar" style="left:519px;top:637px;width:52px;text-align:left;padding-left:1px;">GRAPHIC DESIGN</div>
<div class="bar" style="left:545px;top:667px;width:120px"></div>
<div class="abs" style="left:274px;top:654px;width:92px;height:17px;background:rgba(150,150,150,.58)"></div>
<svg style="left:284.500px;top:659.500px" width="9" height="8" viewBox="0 0 9 8" fill="none" stroke="#fff" stroke-width="1.1" stroke-linejoin="round"><path d="M4.500 1.200L8.200 6.500H0.800z"/></svg>
<span class="t" style="left:304.5px;top:656px;line-height:14px;font-size:12px;color:#fff">Workload</span>
</div>
<div class="abs" style="left:811px;top:421px;width:18px;height:31px;background:#c4c4c4"></div>
<svg style="left:816px;top:430.500px" width="8" height="10" viewBox="0 0 8 10" fill="none" stroke="#fff" stroke-width="1.1" stroke-linejoin="round"><path d="M6.8 1.2v7.6L1.2 5z"/></svg>
<div class="abs" style="left:40px;top:790px;width:1400px;height:29px;background:#fefefe"></div>
<svg style="left:55px;top:797px" width="18" height="16" viewBox="0 0 18 16" fill="none" stroke="#666" stroke-width="1.1">
<path d="M0.6 0.6h16.4v11H6.2L3.4 14.6V11.6H0.6z"/><path d="M3.6 4h10.4M3.6 6.2h10.4M3.6 8.4h7"/></svg>
<span class="t" style="left:80.30px;top:798.44px;font-size:12px;line-height:12px;letter-spacing:-0.231px;color:#444;">Comments</span>
<div class="abs" style="left:146px;top:796px;width:1px;height:16px;background:#d4d4d4"></div>
<svg style="left:161px;top:796.500px" width="16" height="16" viewBox="0 0 15 15" fill="none" stroke="#666" stroke-width="1.050" stroke-linecap="round"><path d="M5 9.600l5.200-5.200a1.400 1.400 0 0 1 2 2L6.400 12.200a2.600 2.600 0 0 1-3.700-3.700L8.600 2.600a3.400 3.400 0 0 1 4.800 0"/></svg>
<span class="t" style="left:183.00px;top:798.44px;font-size:12px;line-height:12px;letter-spacing:0.000px;color:#444;">Attachments</span>
<div class="abs" style="left:259px;top:796px;width:1px;height:16px;background:#d4d4d4"></div>
<svg style="left:269px;top:795px" width="16" height="18" viewBox="0 0 16 18" fill="none" stroke="#666" stroke-width="1.1"><circle cx="7.600" cy="10.100" r="6.600"/><path d="M5.400 1.200h4.600M12.700 5l1.100-1.100"/><path d="M7.600 7.300v3.200" stroke-width="1.400"/></svg>
<span class="t" style="left:291.40px;top:798.44px;font-size:12px;line-height:12px;letter-spacing:-0.112px;color:#444;">Task time tracker</span>
<span class="t" style="left:1036.90px;top:798.24px;font-size:12px;line-height:12px;letter-spacing:-0.184px;color:#444;">Apps</span>
<svg style="left:0;top:0" width="1440" height="819" viewBox="0 0 1440 819"><g fill="#777">
<path transform="translate(1072.974,797.1) scale(0.03066)" d="M325.3 234.3L104.6 13l280.800 161.200-60.100 60.100zM47 0C34 6.800 25.300 19.200 25.300 35.300v441.300c0 16.100 8.700 28.500 21.700 35.300l256.600-256L47 0zm425.200 225.600l-58.900-34.100-65.700 64.500 65.700 64.500 60.100-34.100c18-14.300 18-46.500-1.200-60.800zM104.600 499l280.800-161.200-60.100-60.100L104.600 499z"/>
<path transform="translate(1097.839,793.914) scale(0.04018)" d="M318.7 268.7c-.2-36.700 16.400-64.400 50-84.800-18.800-26.900-47.200-41.700-84.700-44.600-35.500-2.800-74.300 20.700-88.500 20.700-15 0-49.400-19.700-76.400-19.700C63.300 141.200 4 184.800 4 273.500q0 39.300 14.400 81.200c12.800 36.700 59 126.700 107.200 125.200 25.200-.6 43-17.900 75.800-17.900 31.800 0 48.300 17.900 76.400 17.900 48.600-.7 90.400-82.500 102.600-119.300-65.200-30.700-61.700-90-61.700-91.900zm-56.600-164.200c27.300-32.400 24.800-61.900 24-72.500-24.100 1.400-52 16.400-67.900 34.900-17.500 19.800-27.800 44.300-25.600 71.900 26.100 2 49.900-11.400 69.500-34.300z"/>
</g></svg>
<div class="abs" style="left:1126px;top:796px;width:1px;height:16px;background:#d4d4d4"></div>
<span class="t" style="left:1141.00px;top:798.24px;font-size:12px;line-height:12px;letter-spacing:-0.314px;color:#444;">Schedule a demo</span>
<div class="abs" style="left:1240px;top:796px;width:1px;height:16px;background:#d4d4d4"></div>
<svg style="left:1254.5px;top:794.8px" width="17" height="19" viewBox="0 0 17 19"><path d="M1.6 0H14.600A1.600 1.600 0 0 1 16.200 1.600V14.100A1.600 1.600 0 0 1 14.600 15.700H10.400L8.100 18.200 5.800 15.700H1.600A1.600 1.600 0 0 1 0 14.100V1.600A1.600 1.600 0 0 1 1.600 0z" fill="#07574d"/><text transform="translate(8.1,13.900) scale(0.86,1)" text-anchor="middle" font-family="Liberation Sans,Arial,sans-serif" font-weight="700" font-size="16" fill="#fff">?</text></svg>
<span class="t" style="left:1279.00px;top:798.24px;font-size:12px;line-height:12px;letter-spacing:-0.192px;color:#444;">Learning center</span>
<div class="abs" style="left:1369px;top:796px;width:1px;height:16px;background:#d4d4d4"></div>
<span class="t" style="left:1383.80px;top:798.24px;font-size:12px;line-height:12px;letter-spacing:-0.105px;color:#444;">Support</span>
<div id="sideshadow"></div><div id="side">
<svg style="left:8px;top:10px" width="22" height="24" viewBox="0 0 22 24"><path fill="#fff" d="M1.400 0H20.800A1.400 1.400 0 0 1 22.200 1.400V4.200A1 1 0 0 1 21.200 5.200H5.300V19.200H17.300V15.300H11.200A1 1 0 0 1 10.200 14.300V11.600A1 1 0 0 1 11.200 10.600H21.200A1 1 0 0 1 22.200 11.600V22.800A1.400 1.400 0 0 1 20.800 24.200H1.400A1.400 1.400 0 0 1 0 22.800V1.400A1.400 1.400 0 0 1 1.400 0z"/></svg>
<div class="abs" style="left:10px;top:52px;width:20px;height:20px;border-radius:10px;background:#fff"></div>
<svg style="left:15px;top:57px" width="10" height="10" viewBox="0 0 10 10" stroke="#05574d" stroke-width="1.8" fill="none"><path d="M5 0.500v9M0.500 5h9"/></svg>
<div class="abs" style="left:6px;top:90px;width:28px;height:28px;border-radius:4px;background:#07372f"></div>
<svg style="left:12px;top:98px" width="16" height="12" viewBox="0 0 16 12" fill="none" stroke="#fff" stroke-width="1" stroke-linejoin="round">
<path d="M1.400 10.600V1.300h4l1.300 1.400h5.800v2"/><path d="M1.400 10.800L3.600 4.700h11.200l-2.400 6.100z"/></svg>
<svg style="left:12px;top:135px" width="15" height="9" viewBox="0 0 15 9" fill="none" stroke="#fff" stroke-width="1.050"><path d="M3.900 1.600h10.200M3.900 4.500h10.200M3.900 7.300h10.200"/><path d="M1.100 1.600h1.100M1.100 4.500h1.100M1.100 7.300h1.100"/></svg>
<svg style="left:13px;top:169px" width="14" height="14" viewBox="0 0 14 14" fill="none" stroke="#fff" stroke-width="1.200"><circle cx="7" cy="7" r="5.700"/><path d="M7 3.600v3.700l2.200 1.600"/></svg>
<svg style="left:14px;top:205px" width="12" height="13" viewBox="0 0 12 13" fill="none" stroke="#fff" stroke-width="1"><path d="M2 0.600h5.600l3.200 3v7.200a1.500 1.500 0 0 1-1.500 1.500H2.500a1.500 1.500 0 0 1-1.500-1.500V1.600a1 1 0 0 1 1-1z"/><path d="M3.800 10V8.300M6 10V6.800M8.200 10V5.300" stroke-width="1.200"/></svg>
<svg style="left:15px;top:243px" width="11" height="10" viewBox="0 0 11 10" fill="none" stroke="#fff" stroke-width="1"><rect x="0.500" y="0.500" width="3.600" height="3.400"/><rect x="6.400" y="0.500" width="3.600" height="3.400"/><rect x="0.500" y="6" width="3.600" height="3.400"/><rect x="6.400" y="6" width="3.600" height="3.400"/></svg>
<div class="abs" style="left:0;top:537px;width:30px;height:142px;background:#ff9b00;border-radius:0 4px 4px 0"></div>
<span class="t" style="left:16.500px;top:607.500px;font-size:14px;line-height:16px;font-weight:700;color:#fff;letter-spacing:-0.600px;transform:translate(-50%,-50%) rotate(-90deg)">Upgrade account</span>
<svg style="left:13px;top:709px" width="13" height="15" viewBox="0 0 13 15" fill="none" stroke="#fff" stroke-width="0.95" stroke-linejoin="round"><path d="M6.200 1.300c-2.400 0-3.800 1.800-3.800 4.100v2.700c0 1.200-.8 2.100-1.700 3.100h11c-.9-1-1.700-1.900-1.700-3.100V5.400c0-2.300-1.400-4.100-3.800-4.100z"/><path d="M4.800 11.700a1.500 1.500 0 0 0 2.800 0M6.200 0.300v1"/></svg>
<div class="abs" style="left:22px;top:719px;width:16px;height:10px;border-radius:2px;background:#fff;color:#12352f;font-size:9px;line-height:10px;text-align:center">1</div>
<svg style="left:13px;top:746px" width="14" height="14" viewBox="0 0 14 14" fill="none" stroke="#fff" stroke-width="1.400"><circle cx="5.600" cy="5.600" r="4.300"/><path d="M8.800 8.800l4.200 4.200"/></svg>
<svg style="left:13px;top:782px" width="14" height="14" viewBox="-7 -7 14 14" fill="none" stroke="#fff" stroke-width="1.05" stroke-linejoin="round"><circle r="1.9"/><path d="M-0.97 -4.19 L-0.84 -5.64 L0.84 -5.64 L0.97 -4.19 L2.28 -3.65 L3.39 -4.58 L4.58 -3.39 L3.65 -2.28 L4.19 -0.97 L5.64 -0.84 L5.64 0.84 L4.19 0.97 L3.65 2.28 L4.58 3.39 L3.39 4.58 L2.28 3.65 L0.97 4.19 L0.84 5.64 L-0.84 5.64 L-0.97 4.19 L-2.28 3.65 L-3.39 4.58 L-4.58 3.39 L-3.65 2.28 L-4.19 0.97 L-5.64 0.84 L-5.64 -0.84 L-4.19 -0.97 L-3.65 -2.28 L-4.58 -3.39 L-3.39 -4.58 L-2.28 -3.65z"/></svg>
</div>
</div></body></html>
